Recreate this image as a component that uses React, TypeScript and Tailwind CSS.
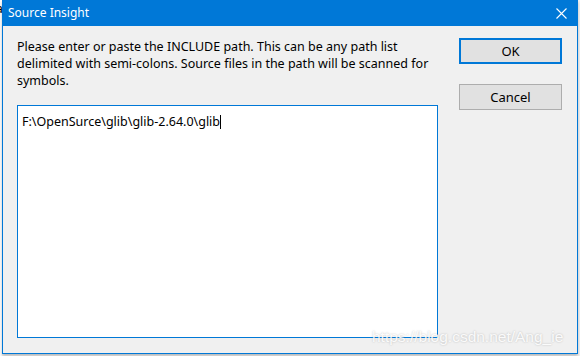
import React from 'react';

const font = { fontFamily: '"Noto Sans", "Open Sans", Arial, sans-serif' };

export default function App() {
  return (
    <div className="relative w-[580px] h-[356px] overflow-hidden bg-[#f4f4f4]" style={font}>
      {/* bits of the window behind */}
      <div className="absolute left-0 top-0 w-[2px] h-[356px] bg-white" />
      <span className="absolute left-[-4px] top-[3px] text-[12px] leading-none text-black">a</span>
      <span className="absolute left-[-3px] top-[36px] text-[12px] leading-none text-black">l</span>

      {/* dialog window */}
      <div className="absolute left-[2px] top-0 w-[576px] h-[354px] border-x border-b border-[#0078d7] bg-[#f0f0f0] shadow-[0_2px_3px_rgba(0,0,0,0.25)] flex flex-col">
        {/* title bar */}
        <div className="h-[26px] bg-[#0078d7] flex items-center justify-between pl-[5px] pr-[10px]">
          <span className="text-[12px] text-white leading-none">Source Insight</span>
          <svg width="11" height="11" viewBox="0 0 11 11" className="mt-[1px]">
            <path d="M0.5 0.5 L10.5 10.5 M10.5 0.5 L0.5 10.5" stroke="white" strokeWidth="1.1" />
          </svg>
        </div>

        {/* body */}
        <div className="flex-1 flex pl-[14px] pr-[15px]">
          <div className="w-[421px] flex flex-col">
            <p className="mt-[12px] text-[12.5px] leading-[17px] text-black">
              Please enter or paste the INCLUDE path. This can be any path list
              <br />
              delimited with semi-colons. Source files in the path will be scanned for
              <br />
              symbols.
            </p>
            <div className="mt-[16px] h-[233px] bg-white border border-[#0078d7] pl-[4px] pt-[2px]">
              <span className="text-[12.5px] leading-[16px] text-black">F:\OpenSurce\glib\glib-2.64.0\glib</span>
              <span className="inline-block w-[1px] h-[14px] bg-black align-[-3px]" />
            </div>
          </div>
          <div className="ml-auto w-[103px] flex flex-col pt-[12px] gap-[20px]">
            <button className="h-[26px] bg-[#e1e1e1] border-2 border-[#0078d7] text-[13px] text-black leading-none">
              OK
            </button>
            <button className="h-[26px] bg-[#e1e1e1] border border-[#adadad] text-[13px] text-black leading-none">
              Cancel
            </button>
          </div>
        </div>
      </div>

      {/* watermark */}
      <span
        className="absolute left-[372px] top-[329px] text-[15.5px] leading-none text-white/90 [text-shadow:0_0_2px_rgba(0,0,0,0.25)]"
        style={{ fontFamily: '"Liberation Sans", Arial, sans-serif' }}
      >
        https://blog.csdn.net/Ang_ie
      </span>
    </div>
  );
}
